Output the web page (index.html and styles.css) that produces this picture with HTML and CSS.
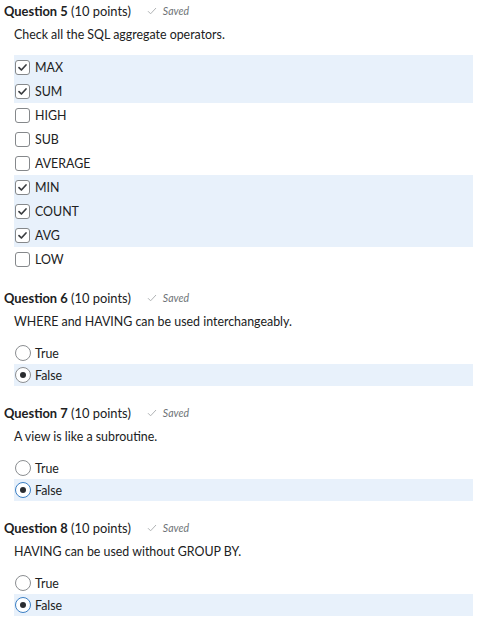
FILE: index.html
```html
<!DOCTYPE html>
<html>
<head>
<meta charset="utf-8">
<link rel="stylesheet" href="styles.css">
</head>
<body>
<div class="quiz">
  <section class="question">
    <div class="qhead"><b>Question 5</b>&nbsp;(10 points)<span class="saved"><svg viewBox="0 0 10 8" width="10" height="8"><path d="M1 4.2 L3.6 6.8 L9 1" fill="none" stroke="#b0b3b5" stroke-width="1"/></svg><i>Saved</i></span></div>
    <p class="prompt">Check all the SQL aggregate operators.</p>
    <ul class="options">
      <li class="opt cb sel"><span class="box"><svg viewBox="0 0 15 15" width="15" height="15"><path d="M4 7.6 L6.4 10 L11 5" fill="none" stroke="#3a3d40" stroke-width="1.7" stroke-linecap="round" stroke-linejoin="round"/></svg></span>MAX</li>
      <li class="opt cb sel"><span class="box"><svg viewBox="0 0 15 15" width="15" height="15"><path d="M4 7.6 L6.4 10 L11 5" fill="none" stroke="#3a3d40" stroke-width="1.7" stroke-linecap="round" stroke-linejoin="round"/></svg></span>SUM</li>
      <li class="opt cb"><span class="box"></span>HIGH</li>
      <li class="opt cb"><span class="box"></span>SUB</li>
      <li class="opt cb"><span class="box"></span>AVERAGE</li>
      <li class="opt cb sel"><span class="box"><svg viewBox="0 0 15 15" width="15" height="15"><path d="M4 7.6 L6.4 10 L11 5" fill="none" stroke="#3a3d40" stroke-width="1.7" stroke-linecap="round" stroke-linejoin="round"/></svg></span>MIN</li>
      <li class="opt cb sel"><span class="box"><svg viewBox="0 0 15 15" width="15" height="15"><path d="M4 7.6 L6.4 10 L11 5" fill="none" stroke="#3a3d40" stroke-width="1.7" stroke-linecap="round" stroke-linejoin="round"/></svg></span>COUNT</li>
      <li class="opt cb sel"><span class="box"><svg viewBox="0 0 15 15" width="15" height="15"><path d="M4 7.6 L6.4 10 L11 5" fill="none" stroke="#3a3d40" stroke-width="1.7" stroke-linecap="round" stroke-linejoin="round"/></svg></span>AVG</li>
      <li class="opt cb"><span class="box"></span>LOW</li>
    </ul>
  </section>

  <section class="question">
    <div class="qhead"><b>Question 6</b>&nbsp;(10 points)<span class="saved"><svg viewBox="0 0 10 8" width="10" height="8"><path d="M1 4.2 L3.6 6.8 L9 1" fill="none" stroke="#b0b3b5" stroke-width="1"/></svg><i>Saved</i></span></div>
    <p class="prompt">WHERE and HAVING can be used interchangeably.</p>
    <ul class="options">
      <li class="opt rd"><span class="circle"></span>True</li>
      <li class="opt rd sel"><span class="circle on"></span>False</li>
    </ul>
  </section>

  <section class="question">
    <div class="qhead"><b>Question 7</b>&nbsp;(10 points)<span class="saved"><svg viewBox="0 0 10 8" width="10" height="8"><path d="M1 4.2 L3.6 6.8 L9 1" fill="none" stroke="#b0b3b5" stroke-width="1"/></svg><i>Saved</i></span></div>
    <p class="prompt">A view is like a subroutine.</p>
    <ul class="options">
      <li class="opt rd"><span class="circle"></span>True</li>
      <li class="opt rd sel"><span class="circle on blue"></span>False</li>
    </ul>
  </section>

  <section class="question">
    <div class="qhead"><b>Question 8</b>&nbsp;(10 points)<span class="saved"><svg viewBox="0 0 10 8" width="10" height="8"><path d="M1 4.2 L3.6 6.8 L9 1" fill="none" stroke="#b0b3b5" stroke-width="1"/></svg><i>Saved</i></span></div>
    <p class="prompt">HAVING can be used without GROUP BY.</p>
    <ul class="options">
      <li class="opt rd"><span class="circle"></span>True</li>
      <li class="opt rd sel"><span class="circle on blue"></span>False</li>
    </ul>
  </section>
</div>
</body>
</html>
```
FILE: styles.css
```css
html, body {
  margin: 0;
  padding: 0;
  background: #ffffff;
}
body {
  font-family: Lato, "Open Sans", "Liberation Sans", sans-serif;
  font-size: 12.4px;
  color: #202122;
}
.quiz {
  padding: 0 13px 0 4px;
}
.question + .question {
  margin-top: 16px;
}
.qhead {
  font-size: 12.9px;
  line-height: 22px;
  height: 22px;
  display: flex;
  align-items: center;
  white-space: nowrap;
}
.qhead b {
  font-weight: 700;
}
.saved {
  display: inline-flex;
  align-items: center;
  margin-left: 16px;
  color: #6e7376;
  font-size: 10.5px;
}
.saved svg {
  margin-right: 6px;
}
.prompt {
  margin: 3px 0 0 10px;
  line-height: 20px;
}
.options {
  list-style: none;
  margin: 10px 0 0 10px;
  padding: 0;
}
.opt {
  display: flex;
  align-items: center;
  padding-left: 1px;
}
.opt.cb {
  height: 24px;
}
.opt.rd {
  height: 22px;
}
.opt.sel {
  background: #e8f1fb;
}
.box {
  width: 15px;
  height: 15px;
  box-sizing: border-box;
  border: 1px solid #85888b;
  border-radius: 3px;
  background: #fff;
  margin-right: 5px;
  position: relative;
}
.box svg {
  position: absolute;
  left: -1px;
  top: -1px;
}
.circle {
  width: 16px;
  height: 16px;
  box-sizing: border-box;
  border: 1px solid #8b8e91;
  border-radius: 50%;
  background: #fff;
  margin-right: 4px;
  display: flex;
  align-items: center;
  justify-content: center;
}
.circle.on::after {
  content: "";
  width: 6px;
  height: 6px;
  border-radius: 50%;
  background: #2b2d30;
}
.circle.blue {
  border: 1.5px solid #3b7fc4;
}
```
